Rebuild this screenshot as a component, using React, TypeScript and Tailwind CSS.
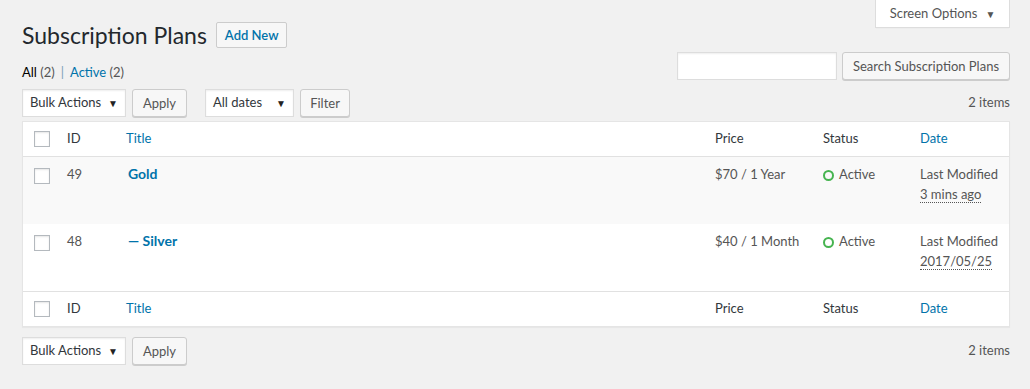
const font = { fontFamily: '"Lato", "Noto Sans", sans-serif' };

const Button = ({ children, className = '' }: { children: React.ReactNode; className?: string }) => (
  <button
    className={`h-[28px] px-[8px] rounded-[3px] border border-[#ccc] bg-[#f7f7f7] text-[13px] text-[#555] shadow-[0_1px_0_#ccc] leading-none whitespace-nowrap ${className}`}
  >
    {children}
  </button>
);

const Select = ({ label, className = '' }: { label: string; className?: string }) => (
  <div
    className={`h-[28px] flex items-center justify-between pl-[7px] pr-[7px] bg-white border border-[#ddd] shadow-[inset_0_1px_2px_rgba(0,0,0,0.07)] text-[13px] text-[#32373c] ${className}`}
  >
    <span>{label}</span>
    <span className="text-[10px] text-[#222]">▼</span>
  </div>
);

const Checkbox = () => (
  <div className="w-4 h-4 bg-white border border-[#b4b9be] shadow-[inset_0_1px_2px_rgba(0,0,0,0.1)]" />
);

const cols = 'grid grid-cols-[34px_59px_1fr_108px_97px_99px]';

const HeadRow = ({ border }: { border: 'top' | 'bottom' }) => (
  <div
    className={`${cols} h-[35px] items-center text-[13px] ${
      border === 'bottom' ? 'border-b border-[#e1e1e1]' : 'border-t border-[#e1e1e1]'
    }`}
  >
    <div className="pl-[11px]">
      <Checkbox />
    </div>
    <div className="pl-[10px] text-[#32373c]">ID</div>
    <div className="pl-[10px] text-[#0073aa]">Title</div>
    <div className="pl-[10px] text-[#32373c]">Price</div>
    <div className="pl-[10px] text-[#32373c]">Status</div>
    <div className="pl-[10px] text-[#0073aa]">Date</div>
  </div>
);

type Plan = { id: number; title: string; child: boolean; price: string; date: string };

const plans: Plan[] = [
  { id: 49, title: 'Gold', child: false, price: '$70 / 1 Year', date: '3 mins ago' },
  { id: 48, title: 'Silver', child: true, price: '$40 / 1 Month', date: '2017/05/25' },
];

const PlanRow = ({ plan, striped }: { plan: Plan; striped: boolean }) => (
  <div className={`${cols} h-[67px] items-start text-[13px] text-[#555] leading-[19.5px] ${striped ? 'bg-[#f9f9f9]' : 'bg-white'}`}>
    <div className="pl-[11px] pt-[11px]">
      <Checkbox />
    </div>
    <div className="pl-[10px] pt-[8px]">{plan.id}</div>
    <div className="pl-[12px] pt-[7px] text-[14px] font-bold text-[#0073aa]">
      {plan.child ? '— ' : ''}
      {plan.title}
    </div>
    <div className="pl-[10px] pt-[8px]">{plan.price}</div>
    <div className="pl-[10px] pt-[8px] flex items-center gap-[5px]">
      <span className="w-[11px] h-[11px] rounded-full border-[2.5px] border-[#46b450] mt-[1px]" />
      <span>Active</span>
    </div>
    <div className="pl-[10px] pt-[8px]">
      <div>Last Modified</div>
      <div className="leading-[18px]">
        <abbr className="no-underline border-b border-dotted border-[#555]">{plan.date}</abbr>
      </div>
    </div>
  </div>
);

export default function App() {
  return (
    <div className="w-[1030px] h-[389px] bg-[#f1f1f1] text-[#444] overflow-hidden" style={font}>
      <div className="pl-[22px] pr-[20px]">
        <div className="flex justify-between items-start">
          <div className="flex items-center mt-[20px] h-[30px]">
            <h1 className="text-[23px] text-[#23282d] leading-[30px]">Subscription Plans</h1>
            <button className="ml-[9px] h-[26px] px-[8px] border border-[#ccc] rounded-[2px] bg-[#f7f7f7] text-[13px] font-semibold text-[#0073aa] leading-none">
              Add New
            </button>
          </div>
          <div className="h-[28px] w-[135px] bg-white border border-t-0 border-[#ddd] shadow-[0_1px_1px_-1px_rgba(0,0,0,0.1)] flex items-center justify-center gap-[8px] text-[13px] text-[#555] pt-[1px]">
            <span>Screen Options</span>
            <span className="text-[10px]">▼</span>
          </div>
        </div>

        <div className="flex justify-between items-start h-[32px]">
          <div className="mt-[13px] text-[13px] leading-[19px]">
            <span className="text-black">All</span> <span className="text-[#555]">(2)</span>
            <span className="text-[#7a9fb8] mx-[6px]">|</span>
            <span className="text-[#0073aa]">Active</span> <span className="text-[#555]">(2)</span>
          </div>
          <div className="mt-[2px] flex items-center gap-[5px]">
            <div className="w-[160px] h-[28px] bg-white border border-[#ddd] shadow-[inset_0_1px_2px_rgba(0,0,0,0.07)]" />
            <Button className="w-[168px]">Search Subscription Plans</Button>
          </div>
        </div>

        <div className="mt-[7px] flex items-center h-[28px]">
          <Select label="Bulk Actions" className="w-[104px]" />
          <Button className="ml-[6px] w-[55px]">Apply</Button>
          <Select label="All dates" className="ml-[18px] w-[89px]" />
          <Button className="ml-[6px] w-[50px]">Filter</Button>
          <div className="ml-auto text-[13px] text-[#555]">2 items</div>
        </div>

        <div className="mt-[4px] bg-white border border-[#e5e5e5] shadow-[0_1px_1px_rgba(0,0,0,0.04)]">
          <HeadRow border="bottom" />
          {plans.map((p, i) => (
            <PlanRow key={p.id} plan={p} striped={i === 0} />
          ))}
          <HeadRow border="top" />
        </div>

        <div className="mt-[10px] flex items-center h-[28px]">
          <Select label="Bulk Actions" className="w-[104px]" />
          <Button className="ml-[6px] w-[55px]">Apply</Button>
          <div className="ml-auto text-[13px] text-[#555]">2 items</div>
        </div>
      </div>
    </div>
  );
}
